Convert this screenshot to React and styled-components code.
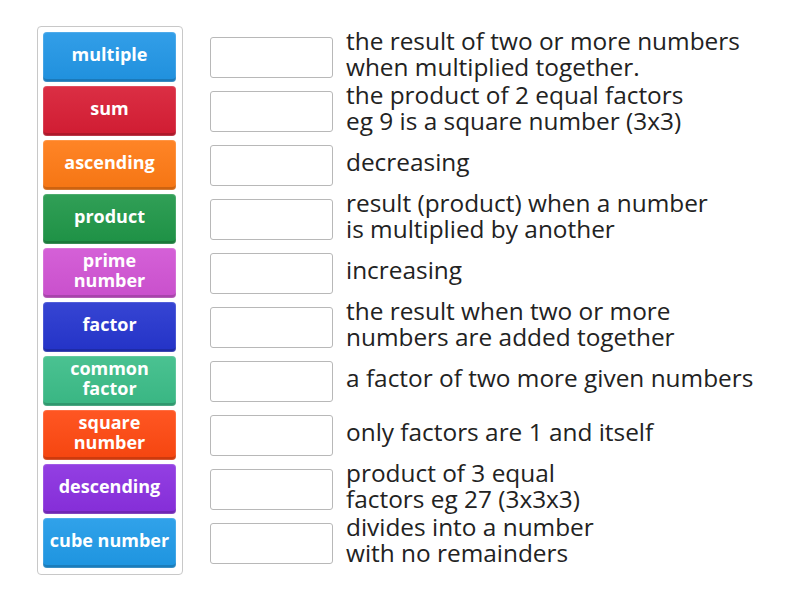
import React from 'react'
import styled, { createGlobalStyle } from 'styled-components'

const GlobalStyle = createGlobalStyle`
  body {
    margin: 0;
    background: #fff;
    font-family: "Open Sans", "Liberation Sans", sans-serif;
  }
`

const tiles = [
  { label: 'multiple', color: '#2196e6' },
  { label: 'sum', color: '#d81d34' },
  { label: 'ascending', color: '#ff7a14' },
  { label: 'product', color: '#1f9748' },
  { label: 'prime number', color: '#d153d4' },
  { label: 'factor', color: '#2535cf' },
  { label: 'common factor', color: '#3bbd88' },
  { label: 'square number', color: '#ff4810' },
  { label: 'descending', color: '#8a2fe0' },
  { label: 'cube number', color: '#1f9ae8' },
]

// each definition is split where the original wraps
const definitions = [
  ['the result of two or more numbers', 'when multiplied together.'],
  ['the product of 2 equal factors', 'eg 9 is a square number (3x3)'],
  ['decreasing'],
  ['result (product) when a number', 'is multiplied by another'],
  ['increasing'],
  ['the result when two or more', 'numbers are added together'],
  ['a factor of two more given numbers'],
  ['only factors are 1 and itself'],
  ['product of 3 equal', 'factors eg 27 (3x3x3)'],
  ['divides into a number', 'with no remainders'],
]

const App = () => {
  return (
    <>
      <GlobalStyle />
      <Page>
        <TileColumn>
          {tiles.map((t) => (
            <Tile key={t.label} color={t.color}>{t.label}</Tile>
          ))}
        </TileColumn>
        <Rows>
          {definitions.map((lines, i) => (
            <Row key={i}>
              <DropBox />
              <Definition>
                {lines.map((l) => <Line key={l}>{l}</Line>)}
              </Definition>
            </Row>
          ))}
        </Rows>
      </Page>
    </>
  )
}

const Page = styled.div`
  display: flex;
  align-items: flex-start;
  padding: 26px 0 0 37px;
`

const TileColumn = styled.div`
  display: flex;
  flex-direction: column;
  gap: 4px;
  padding: 5px 6px 6px 5px;
  border: 1px solid #c8c8c8;
  border-radius: 4px;
`

const Tile = styled.div`
  width: 133px;
  height: 50px;
  box-sizing: border-box;
  padding: 0 4px 7px;
  display: flex;
  align-items: center;
  justify-content: center;
  text-align: center;
  border-radius: 4px;
  background: ${(p) => p.color};
  background-image: linear-gradient(rgba(255, 255, 255, 0.08), rgba(0, 0, 0, 0.04));
  box-shadow: inset 0 0 0 1px rgba(255, 255, 255, 0.14), inset 0 -3px 0 rgba(0, 0, 0, 0.16);
  color: #fff;
  font-weight: 700;
  font-size: 18px;
  line-height: 20px;
`

const Rows = styled.div`
  display: flex;
  flex-direction: column;
  gap: 4px;
  margin-left: 27px;
  padding-top: 6px;
`

const Row = styled.div`
  height: 50px;
  display: flex;
  align-items: center;
`

const DropBox = styled.div`
  flex: none;
  width: 123px;
  height: 41px;
  box-sizing: border-box;
  border: 1px solid #b8b8b8;
  border-radius: 3px;
  background: #fff;
`

const Definition = styled.div`
  margin: 0 0 6px 13px;
  color: #222;
  font-size: 24.4px;
  line-height: 26.5px;
`

const Line = styled.div`
  white-space: nowrap;
`

export default App
